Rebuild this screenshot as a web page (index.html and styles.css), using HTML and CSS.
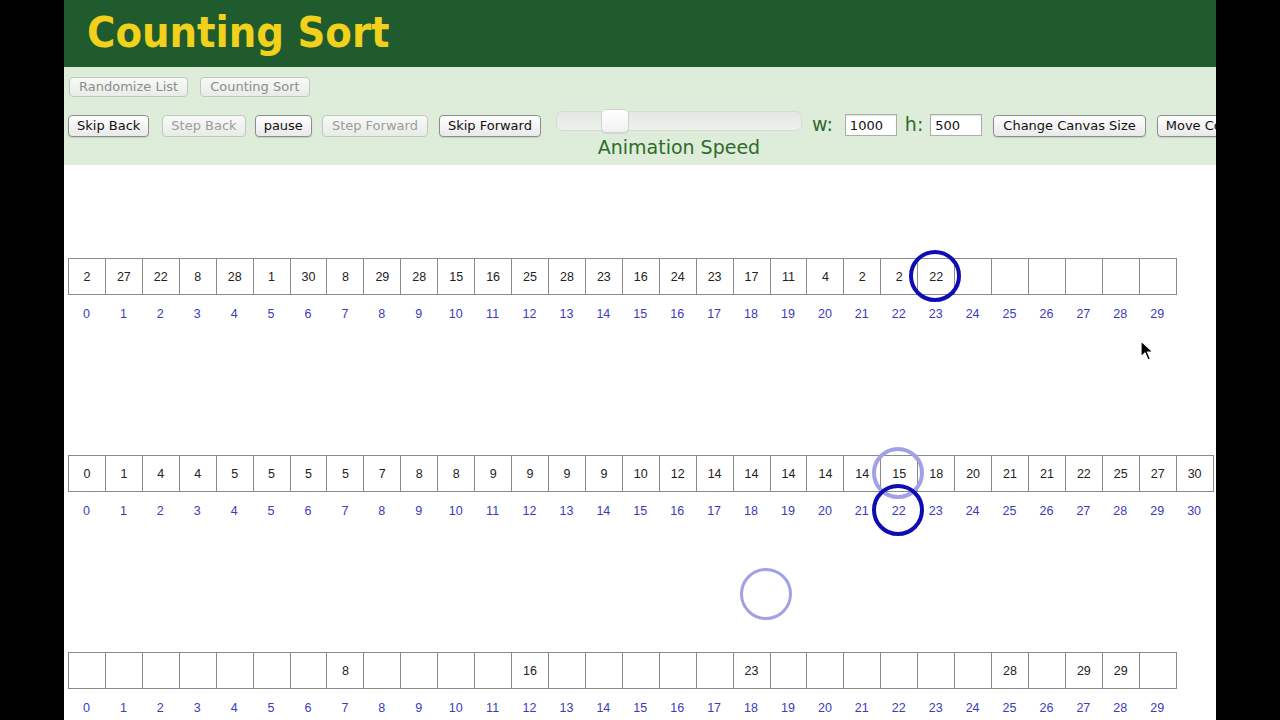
FILE: index.html
```html
<!DOCTYPE html>
<html>
<head>
<meta charset="utf-8">
<title>Counting Sort</title>
<link rel="stylesheet" href="styles.css">
</head>
<body>
<div class="page">
  <header class="header">
    <h1 class="title">Counting Sort</h1>
  </header>
  <section class="controls">
    <div class="row row1">
      <button class="btn disabled">Randomize List</button>
      <button class="btn disabled">Counting Sort</button>
    </div>
    <div class="row row2">
      <button class="btn">Skip Back</button>
      <button class="btn disabled">Step Back</button>
      <button class="btn">pause</button>
      <button class="btn disabled">Step Forward</button>
      <button class="btn">Skip Forward</button>
      <div class="speed">
        <div class="track"><div class="thumb"></div></div>
        <div class="speed-label">Animation Speed</div>
      </div>
      <span class="dim-label">w:</span>
      <input class="dim-input" value="1000">
      <span class="dim-label h">h:</span>
      <input class="dim-input" value="500">
      <button class="btn wide">Change Canvas Size</button>
      <button class="btn">Move Controls</button>
    </div>
  </section>
  <main class="canvas">
    <div class="array">
      <div class="cells">
        <span class="cell">2</span><span class="cell">27</span><span class="cell">22</span><span class="cell">8</span><span class="cell">28</span><span class="cell">1</span><span class="cell">30</span><span class="cell">8</span><span class="cell">29</span><span class="cell">28</span><span class="cell">15</span><span class="cell">16</span><span class="cell">25</span><span class="cell">28</span><span class="cell">23</span><span class="cell">16</span><span class="cell">24</span><span class="cell">23</span><span class="cell">17</span><span class="cell">11</span><span class="cell">4</span><span class="cell">2</span><span class="cell">2</span><span class="cell">22</span><span class="cell"></span><span class="cell"></span><span class="cell"></span><span class="cell"></span><span class="cell"></span><span class="cell"></span>
      </div>
      <div class="labels">
        <span>0</span><span>1</span><span>2</span><span>3</span><span>4</span><span>5</span><span>6</span><span>7</span><span>8</span><span>9</span><span>10</span><span>11</span><span>12</span><span>13</span><span>14</span><span>15</span><span>16</span><span>17</span><span>18</span><span>19</span><span>20</span><span>21</span><span>22</span><span>23</span><span>24</span><span>25</span><span>26</span><span>27</span><span>28</span><span>29</span>
      </div>
    </div>
    <div class="array">
      <div class="cells">
        <span class="cell">0</span><span class="cell">1</span><span class="cell">4</span><span class="cell">4</span><span class="cell">5</span><span class="cell">5</span><span class="cell">5</span><span class="cell">5</span><span class="cell">7</span><span class="cell">8</span><span class="cell">8</span><span class="cell">9</span><span class="cell">9</span><span class="cell">9</span><span class="cell">9</span><span class="cell">10</span><span class="cell">12</span><span class="cell">14</span><span class="cell">14</span><span class="cell">14</span><span class="cell">14</span><span class="cell">14</span><span class="cell">15</span><span class="cell">18</span><span class="cell">20</span><span class="cell">21</span><span class="cell">21</span><span class="cell">22</span><span class="cell">25</span><span class="cell">27</span><span class="cell">30</span>
      </div>
      <div class="labels">
        <span>0</span><span>1</span><span>2</span><span>3</span><span>4</span><span>5</span><span>6</span><span>7</span><span>8</span><span>9</span><span>10</span><span>11</span><span>12</span><span>13</span><span>14</span><span>15</span><span>16</span><span>17</span><span>18</span><span>19</span><span>20</span><span>21</span><span>22</span><span>23</span><span>24</span><span>25</span><span>26</span><span>27</span><span>28</span><span>29</span><span>30</span>
      </div>
    </div>
    <div class="array">
      <div class="cells">
        <span class="cell"></span><span class="cell"></span><span class="cell"></span><span class="cell"></span><span class="cell"></span><span class="cell"></span><span class="cell"></span><span class="cell">8</span><span class="cell"></span><span class="cell"></span><span class="cell"></span><span class="cell"></span><span class="cell">16</span><span class="cell"></span><span class="cell"></span><span class="cell"></span><span class="cell"></span><span class="cell"></span><span class="cell">23</span><span class="cell"></span><span class="cell"></span><span class="cell"></span><span class="cell"></span><span class="cell"></span><span class="cell"></span><span class="cell">28</span><span class="cell"></span><span class="cell">29</span><span class="cell">29</span><span class="cell"></span>
      </div>
      <div class="labels">
        <span>0</span><span>1</span><span>2</span><span>3</span><span>4</span><span>5</span><span>6</span><span>7</span><span>8</span><span>9</span><span>10</span><span>11</span><span>12</span><span>13</span><span>14</span><span>15</span><span>16</span><span>17</span><span>18</span><span>19</span><span>20</span><span>21</span><span>22</span><span>23</span><span>24</span><span>25</span><span>26</span><span>27</span><span>28</span><span>29</span>
      </div>
    </div>

    <div class="ring dark r1"></div>
    <div class="ring light r2"></div>
    <div class="ring dark r3"></div>
    <div class="ring light r4"></div>

    <svg class="cursor" width="14" height="22" viewBox="0 0 14 22">
      <path d="M1 1 L1 17 L5 13 L8 20 L10.5 19 L7.5 12 L13 12 Z" fill="#000" stroke="#fff" stroke-width="1.2" stroke-linejoin="round"/>
    </svg>
  </main>
</div>
</body>
</html>
```

FILE: styles.css
```css
* { box-sizing: border-box; }

html, body {
  margin: 0;
  height: 720px;
  background: #000;
  overflow: hidden;
}

.page {
  width: 1152px;
  height: 720px;
  margin: 0 auto;
  display: flex;
  flex-direction: column;
  background: #fff;
  overflow: hidden;
}

.header {
  height: 67px;
  flex: none;
  background: #1f5b2d;
  display: flex;
  align-items: center;
  padding-left: 23px;
}

.title {
  margin: 0;
  font-family: "DejaVu Sans Condensed", "DejaVu Sans", sans-serif;
  font-stretch: condensed;
  font-weight: bold;
  font-size: 43px;
  line-height: 1;
  color: #f1d11c;
  padding-bottom: 2px;
}

.controls {
  height: 98px;
  flex: none;
  background: #deedda;
  padding: 10px 0 0 4px;
  overflow: hidden;
}

.row {
  display: flex;
  white-space: nowrap;
}

.row1 {
  gap: 12px;
  padding-left: 1px;
}

.row1 .btn.disabled {
  color: #8c8c8c;
}

.row2 {
  align-items: flex-start;
  margin-top: 12px;
}

.btn {
  flex: none;
  height: 20px;
  padding: 0 9px;
  font-family: "DejaVu Sans", sans-serif;
  font-size: 13px;
  line-height: 18px;
  color: #111;
  border: 1px solid #8e8e8e;
  border-radius: 4px;
  background: linear-gradient(#ffffff, #e9e9e9);
  box-shadow: 0 1px 1px rgba(0, 0, 0, 0.12);
}

.btn.disabled {
  color: #9c9c9c;
  border-color: #c3c7c2;
  background: linear-gradient(#f7f9f6, #e8ece7);
  box-shadow: none;
}

.row2 .btn {
  height: 22px;
  margin-top: 6px;
  padding: 0 8px;
  line-height: 20px;
}

.row2 .btn:nth-child(1) { margin-right: 13px; }
.row2 .btn:nth-child(2) { margin-right: 9px; }
.row2 .btn:nth-child(3) { margin-right: 10px; }
.row2 .btn:nth-child(4) { margin-right: 11px; padding: 0 9px; }
.row2 .btn:nth-child(5) { margin-right: 15px; }
.row2 .btn.wide { margin-left: 11px; margin-right: 11px; padding: 0 9px; }

.speed {
  flex: none;
  width: 246px;
  display: flex;
  flex-direction: column;
  align-items: center;
}

.track {
  position: relative;
  width: 246px;
  height: 20px;
  margin-top: 2px;
  border-radius: 6px;
  background: linear-gradient(#e3e8e2, #eef2ed);
  border: 1px solid #d6dcd5;
}

.thumb {
  position: absolute;
  left: 44px;
  top: -3px;
  width: 28px;
  height: 24px;
  border-radius: 5px;
  background: linear-gradient(#ffffff, #f1f1f1);
  border: 1px solid #cfd2ce;
  box-shadow: 0 1px 1px rgba(0, 0, 0, 0.08);
}

.speed-label {
  margin-top: 5px;
  font-family: "DejaVu Sans", sans-serif;
  font-size: 19px;
  line-height: 22px;
  color: #2e6b2c;
}

.dim-label {
  flex: none;
  margin-left: 10px;
  margin-right: 12px;
  margin-top: 3px;
  font-family: "DejaVu Sans", sans-serif;
  font-size: 19px;
  line-height: 24px;
  color: #2e6b2c;
}

.dim-label.h { margin-left: 8px; margin-right: 7px; }

.dim-input {
  flex: none;
  width: 52px;
  height: 22px;
  margin-top: 5px;
  padding: 0 4px;
  font-family: "DejaVu Sans", sans-serif;
  font-size: 13px;
  color: #111;
  background: #fff;
  border: 1px solid #a9aea8;
  box-shadow: inset 0 1px 1px rgba(0, 0, 0, 0.12);
}

.canvas {
  position: relative;
  flex: none;
  height: 555px;
  background: #fff;
  padding: 93px 0 0 4px;
  overflow: hidden;
}

.array {
  height: 197px;
}

.cells {
  display: inline-flex;
  vertical-align: top;
  border-left: 1px solid #8a8a8a;
}

.cell {
  width: 36.93px;
  height: 37px;
  border: 1px solid #8a8a8a;
  border-left: 0;
  display: flex;
  align-items: center;
  justify-content: center;
  font-family: "Liberation Sans", Arial, sans-serif;
  font-size: 12.5px;
  color: #222;
}

.labels {
  display: flex;
  margin-top: 12px;
}

.labels span {
  width: 36.93px;
  text-align: center;
  font-family: "Liberation Sans", Arial, sans-serif;
  font-size: 12.5px;
  line-height: 14px;
  color: #3b3bbb;
}

.ring {
  position: absolute;
  width: 52px;
  height: 52px;
  border-radius: 50%;
  border: 4px solid #0d0db3;
}

.ring.light {
  border-color: #a3a1e6;
}

.r1 { left: 845px; top: 85px; }
.r2 { left: 808px; top: 282px; }
.r3 { left: 808px; top: 319px; }
.r4 { left: 676px; top: 403px; border-width: 3.5px; }

.cursor {
  position: absolute;
  left: 1076px;
  top: 175px;
}
```
